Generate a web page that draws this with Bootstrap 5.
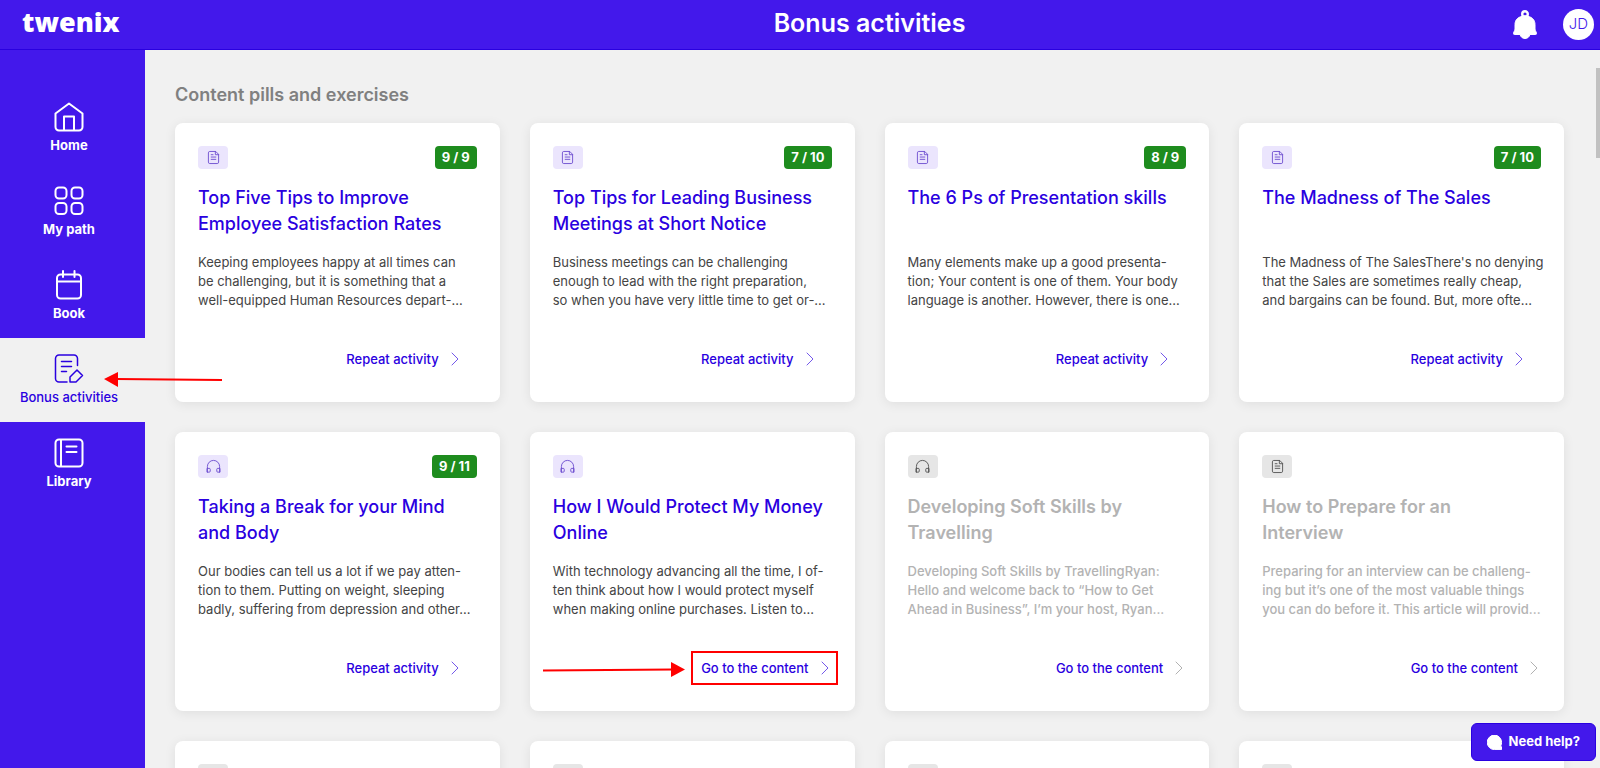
<!DOCTYPE html>
<html lang="en">
<head>
<meta charset="utf-8">
<meta name="viewport" content="width=device-width, initial-scale=1">
<title>Bonus activities</title>
<link href="https://cdn.jsdelivr.net/npm/bootstrap@5.3.0/dist/css/bootstrap.min.css" rel="stylesheet">
<style>
:root { --brand: #4318eb; --ink: #2a00e0; }
body { font-family: Inter, "Open Sans", sans-serif; background: #f1f1f1; }
svg { display: block; fill: none; stroke: currentColor; stroke-linecap: round; stroke-linejoin: round; }
.topbar { height: 50px; background: var(--brand); border-bottom: 1px solid var(--ink); padding: 0 6px 1px 0; }
.brand-cell { width: 145px; padding: 0 0 3px 22px; }
.bar-side { flex: 1 1 0; }
.logo { font: 900 27px/1 "Noto Sans", "Open Sans", sans-serif; }
.page-title { font-size: 25px; line-height: 30px; font-weight: 600; padding-bottom: 3px; }
.avatar { width: 31px; height: 31px; font-size: 15px; font-weight: 300; color: var(--brand); }
.bell { margin-right: 26px; }
.shell { height: calc(100vh - 50px); }
.sidebar { width: 145px; background: var(--brand); padding-top: 36px; }
.side-item { height: 84px; padding: 16px 7px 0 0; gap: 3px; font-size: 13px; line-height: 20px; font-weight: 700; color: #fff; text-decoration: none; position: relative; }
.side-item.active { background: #f1f1f1; color: var(--ink); font-weight: 500; }
.content-area { padding: 34px 36px 0 30px; }
.section-title { font-size: 18px; line-height: 21px; font-weight: 600; color: #808080; margin: 0 0 18px; }
.tiles { display: grid; grid-template-columns: repeat(4, minmax(0, 1fr)); gap: 30px; grid-auto-rows: 279px; }
.tile { padding: 23px; border: 0; border-radius: 8px; box-shadow: 0 2px 12px rgba(0,0,0,.08); color: #444; }
.kind { width: 30px; height: 23px; border-radius: 4px; background: #ebe5fd; color: #6f50d0; padding-bottom: 1px; }
.score { height: 23px; border-radius: 4px; background: #1e8c1e; font-size: 13px; line-height: 17px; font-weight: 700; padding: 3px 7px; }
.tile h3 { font-size: 18px; line-height: 26px; font-weight: 500; min-height: 52px; margin: 16px 0 16px; color: var(--ink); white-space: nowrap; }
.tile p { font-size: 13px; line-height: 19px; margin: 0 0 39px; white-space: nowrap; }
.go { font-size: 13px; line-height: 20px; font-weight: 500; color: var(--ink); text-decoration: none; gap: 12px; margin-right: 3px; }
.go.again { margin-right: 18px; }
.go svg { opacity: .65; }
.locked .kind { background: #e6e6e6; color: #555; }
.locked h3 { color: #b3b3b3; font-weight: 600; }
.locked p { color: #b3b3b3; font-weight: 500; }
.locked .go svg { color: #888; }
.hint { color: red; position: absolute; z-index: 3; }
.hint-side { left: 104px; top: 34px; }
.hint-tile { left: 13px; bottom: 33px; }
.frame { position: absolute; inset: -7px -9px -7px -10px; border: 2px solid red; }
.scroll-thumb { position: fixed; right: 0; top: 68px; width: 4px; height: 90px; background: #c1c1c1; }
.help { position: fixed; right: 4px; bottom: 7px; height: 38px; border: 1px solid var(--ink); border-radius: 6px; background: var(--brand); color: #fff; font-size: 13px; font-weight: 700; padding: 0 15px; gap: 7px; }
</style>
</head>
<body class="overflow-hidden">
<svg width="0" height="0" class="position-absolute" aria-hidden="true">
  <symbol id="doc" viewBox="0 0 14 16"><path d="M9 1.500H3A1.500 1.500 0 0 0 1.500 3v10A1.500 1.500 0 0 0 3 14.500h8a1.500 1.500 0 0 0 1.500-1.500V5zM9 1.500V5h3.500M4.500 5h2M4.500 7.500h5M4.500 10h5"/></symbol>
  <symbol id="phones" viewBox="0 0 16 16"><path d="M1.500 14V8a6.500 6.500 0 0 1 13 0v6M1.500 10h2q1 0 1 1v2q0 1-1 1h-2zM14.500 10h-2q-1 0-1 1v2q0 1 1 1h2z"/></symbol>
  <symbol id="chev" viewBox="0 0 8 14"><path d="M1 1l6 6-6 6"/></symbol>
</svg>

<header class="topbar d-flex align-items-center text-white">
  <div class="brand-cell flex-shrink-0"><a href="#" class="logo text-white text-decoration-none">twenix</a></div>
  <div class="bar-side"></div>
  <h1 class="page-title text-center m-0">Bonus activities</h1>
  <div class="bar-side d-flex justify-content-end align-items-center">
    <button class="btn bell p-0 border-0 text-white" aria-label="Notifications">
      <svg width="24" height="29" viewBox="0 0 24 29" stroke="none"><circle cx="12" cy="4" r="2.800" stroke="#fff" stroke-width="2.400"/><path fill="#fff" d="M12 6C5 6 2 10 2 14.500V19c0 2-1.500 2.500-1.500 4.500 0 .8.400 1 1 1H7c.8 2.500 2.500 4 5 4s4.200-1.500 5-4h5.500c.6 0 1-.2 1-1 0-2-1.500-2.500-1.500-4.500v-4.500C22 10 19 6 12 6z"/></svg>
    </button>
    <button class="btn avatar rounded-circle bg-white p-0 border-0">JD</button>
  </div>
</header>

<div class="shell d-flex">
  <nav class="sidebar flex-shrink-0">
    <a href="#" class="side-item d-flex flex-column align-items-center"><svg width="30" height="30" viewBox="0 0 30 30" stroke-width="2"><path d="M1.500 11.500 15 1.500l13.500 10V25a3.500 3.500 0 0 1-3.500 3.500H5A3.500 3.500 0 0 1 1.500 25zM10 28V14.500h10V28"/></svg>Home</a>
    <a href="#" class="side-item d-flex flex-column align-items-center"><svg width="30" height="30" viewBox="0 0 30 30" stroke-width="2"><rect x="1.500" y="1.500" width="11" height="11" rx="3.500"/><rect x="17.500" y="1.500" width="11" height="11" rx="3.500"/><rect x="1.500" y="17" width="11" height="11" rx="3.500"/><rect x="17.500" y="17" width="11" height="11" rx="3.500"/></svg>My path</a>
    <a href="#" class="side-item d-flex flex-column align-items-center"><svg width="30" height="30" viewBox="0 0 30 30" stroke-width="2"><rect x="3" y="4.500" width="24" height="24" rx="3.500"/><path d="M3 11.500h24M9 1v6M20.500 1v6"/></svg>Book</a>
    <a href="#" class="side-item active d-flex flex-column align-items-center"><svg width="30" height="30" viewBox="0 0 30 30" stroke-width="1.500"><path d="M13 28H5a3.500 3.500 0 0 1-3.500-3.500v-20A3.500 3.500 0 0 1 5 1h15a3.500 3.500 0 0 1 3.500 3.500v7M7.500 7.500h10M7.500 12.500h10M7.500 17.500h5M16 28v-5l7-7 5.500 5.500-6.500 6.500z"/></svg>Bonus activities
      <svg class="hint hint-side" width="118" height="16" viewBox="0 0 118 16" stroke-linecap="butt"><path d="M12 7l106 1" stroke-width="2"/><path d="M0 7 14 0v15z" fill="red" stroke="none"/></svg></a>
    <a href="#" class="side-item d-flex flex-column align-items-center"><svg width="30" height="30" viewBox="0 0 30 30" stroke-width="2"><rect x="1.500" y="1.500" width="27" height="27" rx="3.500"/><path d="M7 2v26M12.500 8.500h10M12.500 14h10"/></svg>Library</a>
  </nav>

  <main class="content-area flex-grow-1 overflow-hidden">
    <h2 class="section-title">Content pills and exercises</h2>
    <div class="tiles">
      <article class="card tile">
        <div class="d-flex justify-content-between"><span class="kind d-flex align-items-center justify-content-center"><svg width="13" height="15"><use href="#doc"/></svg></span><span class="badge score">9 / 9</span></div>
        <h3>Top Five Tips to Improve<br>Employee Satisfaction Rates</h3>
        <p>Keeping employees happy at all times can<br>be challenging, but it is something that a<br>well-equipped Human Resources depart-...</p>
        <a href="#" class="go again d-flex align-items-center align-self-end">Repeat activity<svg width="8" height="14"><use href="#chev"/></svg></a>
      </article>
      <article class="card tile">
        <div class="d-flex justify-content-between"><span class="kind d-flex align-items-center justify-content-center"><svg width="13" height="15"><use href="#doc"/></svg></span><span class="badge score">7 / 10</span></div>
        <h3>Top Tips for Leading Business<br>Meetings at Short Notice</h3>
        <p>Business meetings can be challenging<br>enough to lead with the right preparation,<br>so when you have very little time to get or-...</p>
        <a href="#" class="go again d-flex align-items-center align-self-end">Repeat activity<svg width="8" height="14"><use href="#chev"/></svg></a>
      </article>
      <article class="card tile">
        <div class="d-flex justify-content-between"><span class="kind d-flex align-items-center justify-content-center"><svg width="13" height="15"><use href="#doc"/></svg></span><span class="badge score">8 / 9</span></div>
        <h3>The 6 Ps of Presentation skills</h3>
        <p>Many elements make up a good presenta-<br>tion; Your content is one of them. Your body<br>language is another. However, there is one...</p>
        <a href="#" class="go again d-flex align-items-center align-self-end">Repeat activity<svg width="8" height="14"><use href="#chev"/></svg></a>
      </article>
      <article class="card tile">
        <div class="d-flex justify-content-between"><span class="kind d-flex align-items-center justify-content-center"><svg width="13" height="15"><use href="#doc"/></svg></span><span class="badge score">7 / 10</span></div>
        <h3>The Madness of The Sales</h3>
        <p>The Madness of The SalesThere's no denying<br>that the Sales are sometimes really cheap,<br>and bargains can be found. But, more ofte...</p>
        <a href="#" class="go again d-flex align-items-center align-self-end">Repeat activity<svg width="8" height="14"><use href="#chev"/></svg></a>
      </article>

      <article class="card tile">
        <div class="d-flex justify-content-between"><span class="kind d-flex align-items-center justify-content-center"><svg width="15" height="15"><use href="#phones"/></svg></span><span class="badge score">9 / 11</span></div>
        <h3>Taking a Break for your Mind<br>and Body</h3>
        <p>Our bodies can tell us a lot if we pay atten-<br>tion to them. Putting on weight, sleeping<br>badly, suffering from depression and other...</p>
        <a href="#" class="go again d-flex align-items-center align-self-end">Repeat activity<svg width="8" height="14"><use href="#chev"/></svg></a>
      </article>
      <article class="card tile">
        <div class="d-flex justify-content-between"><span class="kind d-flex align-items-center justify-content-center"><svg width="15" height="15"><use href="#phones"/></svg></span></div>
        <h3>How I Would Protect My Money<br>Online</h3>
        <p>With technology advancing all the time, I of-<br>ten think about how I would protect myself<br>when making online purchases. Listen to...</p>
        <a href="#" class="go d-flex align-items-center align-self-end position-relative">Go to the content<svg width="8" height="14"><use href="#chev"/></svg><span class="frame"></span></a>
        <svg class="hint hint-tile" width="142" height="16" viewBox="0 0 142 16" stroke-linecap="butt"><path d="M0 8.500l130-1" stroke-width="2"/><path d="M142 7.500 128 0v15z" fill="red" stroke="none"/></svg>
      </article>
      <article class="card tile locked">
        <div class="d-flex justify-content-between"><span class="kind d-flex align-items-center justify-content-center"><svg width="15" height="15"><use href="#phones"/></svg></span></div>
        <h3>Developing Soft Skills by<br>Travelling</h3>
        <p>Developing Soft Skills by TravellingRyan:<br>Hello and welcome back to “How to Get<br>Ahead in Business”, I’m your host, Ryan...</p>
        <a href="#" class="go d-flex align-items-center align-self-end">Go to the content<svg width="8" height="14"><use href="#chev"/></svg></a>
      </article>
      <article class="card tile locked">
        <div class="d-flex justify-content-between"><span class="kind d-flex align-items-center justify-content-center"><svg width="13" height="15"><use href="#doc"/></svg></span></div>
        <h3>How to Prepare for an<br>Interview</h3>
        <p>Preparing for an interview can be challeng-<br>ing but it’s one of the most valuable things<br>you can do before it. This article will provid...</p>
        <a href="#" class="go d-flex align-items-center align-self-end">Go to the content<svg width="8" height="14"><use href="#chev"/></svg></a>
      </article>

      <article class="card tile locked"><span class="kind"></span></article>
      <article class="card tile locked"><span class="kind"></span></article>
      <article class="card tile locked"><span class="kind"></span></article>
      <article class="card tile locked"><span class="kind"></span></article>
    </div>
  </main>
</div>
<div class="scroll-thumb"></div>
<button class="help d-flex align-items-center"><svg width="15" height="15" viewBox="0 0 15 15" stroke="none"><path fill="#fff" d="M7.500 0a7.300 7.300 0 1 0 0 14.600h7v-2.600l-.8-1A7.400 7.400 0 0 0 7.500 0z"/></svg>Need help?</button>
<script src="https://cdn.jsdelivr.net/npm/bootstrap@5.3.0/dist/js/bootstrap.bundle.min.js"></script>
</body>
</html>
